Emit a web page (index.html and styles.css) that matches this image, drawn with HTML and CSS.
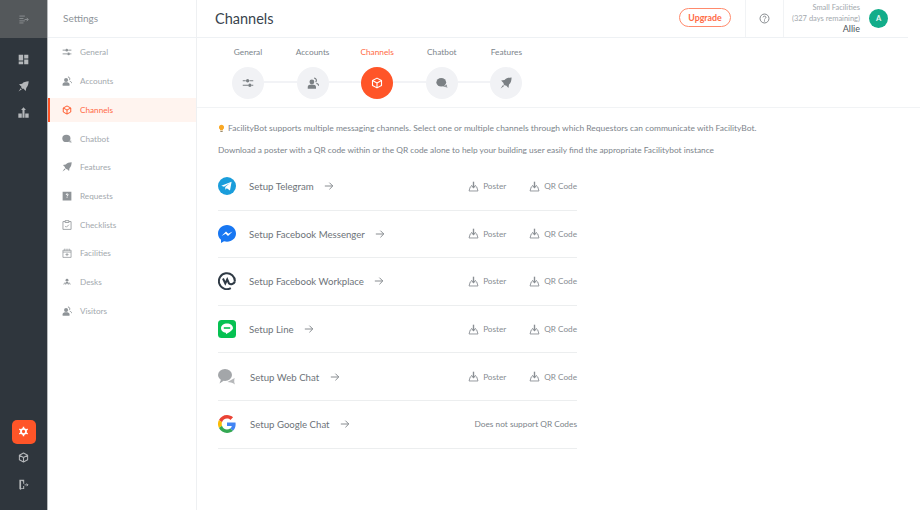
FILE: index.html
```html
<!DOCTYPE html>
<html lang="en">
<head>
<meta charset="utf-8">
<title>Channels</title>
<link rel="stylesheet" href="styles.css">
</head>
<body>
<svg class="defs" width="0" height="0" aria-hidden="true">
  <defs>
    <symbol id="i-sliders" viewBox="0 0 16 16"><path d="M1 5h4M10 5h5M1 11h7M13 11h2" fill="none" stroke="currentColor" stroke-width="1.5"/><circle cx="7.5" cy="5" r="2.2" fill="currentColor"/><circle cx="10.5" cy="11" r="2.2" fill="currentColor"/></symbol>
    <symbol id="i-users" viewBox="0 0 16 16"><circle cx="6.5" cy="6.500" r="3.200" fill="currentColor"/><path d="M1 15.500v-2.500c0-2 2.300-3 5.500-3s5.500 1 5.500 3v2.500z" fill="currentColor"/><path d="M9.500 1.500a3 3 0 0 1 2 5.200M12.500 8.500c2 .4 3 1.400 3 3" fill="none" stroke="currentColor" stroke-width="1.500"/></symbol>
    <symbol id="i-box" viewBox="0 0 16 16"><path d="M8 1.500 14 4.800v6.400L8 14.500 2 11.200V4.800zM2 4.800l6 3.200 6-3.200M8 8v6.500" fill="none" stroke="currentColor" stroke-width="1.500" stroke-linejoin="round"/></symbol>
    <symbol id="i-chat" viewBox="0 0 16 16"><ellipse cx="7" cy="7" rx="6.500" ry="5.800" fill="currentColor"/><path d="M9 12.800c2 .3 4 .5 6.500 1.700-.7-1-1-2.500-.8-4.500z" fill="currentColor" opacity=".75"/></symbol>
    <symbol id="i-rocket" viewBox="0 0 16 16"><path d="M15.500.5c-4 .3-7.500 1-9.500 3.500L1.500 4.800 5 8.200l-.5 1 2.300 2.300 1-.5 3.500 3.500.7-4.500C14.500 8 15.200 4.500 15.500.5z" fill="currentColor"/><path d="M4 10.500.8 15.200 5.500 12z" fill="currentColor"/></symbol>
    <symbol id="i-download" viewBox="0 0 16 16"><path d="M8 1v8.500" fill="none" stroke="currentColor" stroke-width="2"/><path d="M4.800 6.200 8 9.800l3.200-3.600" fill="none" stroke="currentColor" stroke-width="1.500"/><path d="M4.800 8.500H3.300L1.500 14.500h13l-1.800-6h-1.500" fill="none" stroke="currentColor" stroke-width="1.300"/></symbol>
    <symbol id="i-arrow" viewBox="0 0 12 12"><path d="M1 6h9.500M6.500 2l4 4-4 4" fill="none" stroke="currentColor" stroke-width="1.100"/></symbol>
  </defs>
</svg>

<div class="app">
  <aside class="rail">
    <div class="rail-top">
      <svg class="rail-icon-sm" viewBox="0 0 16 16"><path d="M2 3h8M2 6.500h6M2 10h8M2 13h6M9.500 8h5M12.500 5.500 15 8l-2.500 2.500" fill="none" stroke="currentColor" stroke-width="1.300"/></svg>
    </div>
    <div class="rail-main">
      <svg class="rail-icon" viewBox="0 0 16 16"><path d="M1 1h6.500v8.500H1zM9 1h6v5.500H9zM1 11h6.500v4H1zM9 8h6v7H9z" fill="currentColor"/></svg>
      <svg class="rail-icon"><use href="#i-rocket"/></svg>
      <svg class="rail-icon" viewBox="0 0 16 16"><path d="M8 .5 4.500 4.500h2V15.500h3V4.500h2zM.5 9.500h5v6h-5zM10.500 9.500h5v6h-5z" fill="currentColor"/></svg>
    </div>
    <div class="rail-bottom">
      <div class="rail-active">
        <svg class="gear" viewBox="0 0 16 16"><circle cx="8" cy="8" r="3.700" fill="none" stroke="currentColor" stroke-width="2.600"/><path d="M8 1v3M8 12v3M1.900 4.500l2.600 1.500M11.500 10l2.600 1.500M1.900 11.500 4.500 10M11.500 6l2.600-1.500" stroke="currentColor" stroke-width="2.200"/></svg>
      </div>
      <svg class="rail-icon"><use href="#i-box"/></svg>
      <svg class="rail-icon" viewBox="0 0 16 16"><path d="M2 1h7v6H7.500V3.500L4.500 2.500v11h3V10H9v4.500H4.500V16L2 14.500z" fill="currentColor"/><path d="M9.500 8.500h5M12.500 6.500l2 2-2 2" fill="none" stroke="currentColor" stroke-width="1.300"/></svg>
    </div>
  </aside>

  <nav class="side">
    <div class="side-title">Settings</div>
    <ul class="side-list">
      <li class="side-item"><svg class="side-icon"><use href="#i-sliders"/></svg>General</li>
      <li class="side-item"><svg class="side-icon"><use href="#i-users"/></svg>Accounts</li>
      <li class="side-item is-active"><svg class="side-icon"><use href="#i-box"/></svg>Channels</li>
      <li class="side-item"><svg class="side-icon"><use href="#i-chat"/></svg>Chatbot</li>
      <li class="side-item"><svg class="side-icon"><use href="#i-rocket"/></svg>Features</li>
      <li class="side-item"><svg class="side-icon" viewBox="0 0 16 16"><path fill-rule="evenodd" d="M1 1h14v14H1zM6 6.200h1.400c0-1 1.200-1.300 1.600-.6.400.8-1.600 1.500-1.600 3.200h1.400c0-1.200 2-1.800 1.500-3.600C9.700 3.400 6.300 3.600 6 6.200zM7.400 9.800v1.500h1.400V9.800z" fill="currentColor"/></svg>Requests</li>
      <li class="side-item"><svg class="side-icon" viewBox="0 0 16 16"><path d="M5 2.500H1.500v12.500h13V2.500H11M5 1h6v3H5zM5 9.500l2 2 4-4" fill="none" stroke="currentColor" stroke-width="1.300"/></svg>Checklists</li>
      <li class="side-item"><svg class="side-icon" viewBox="0 0 16 16"><path d="M1.500 3.500h13V15h-13zM1.500 6.500h13M4.500 1v3.500M8 1v3.500M11.500 1v3.500M8 8v5M5.500 10.500h5" fill="none" stroke="currentColor" stroke-width="1.200"/></svg>Facilities</li>
      <li class="side-item"><svg class="side-icon" viewBox="0 0 16 16"><circle cx="8" cy="5" r="2.300" fill="currentColor"/><path d="M5 12c0-3 1-4.500 3-4.500s3 1.500 3 4.500H9.500L8 9.500 6.500 12zM2 12l2-3.500.6 1L3.500 12zM14 12l-2-3.500-.6 1 1.100 2.500z" fill="currentColor"/></svg>Desks</li>
      <li class="side-item"><svg class="side-icon"><use href="#i-users"/></svg>Visitors</li>
    </ul>
  </nav>

  <div class="main">
    <header class="topbar">
      <h1 class="page-title">Channels</h1>
      <button class="upgrade" type="button">Upgrade</button>
      <div class="help">
        <svg class="help-icon" viewBox="0 0 16 16"><circle cx="8" cy="8" r="6.500" fill="none" stroke="currentColor" stroke-width="1.300"/><path d="M5.800 6.300C6 4 10.200 4 10.200 6.300c0 1.500-2.200 1.500-2.200 3.200" fill="none" stroke="currentColor" stroke-width="1.200"/><circle cx="8" cy="11.500" r=".8" fill="currentColor"/></svg>
      </div>
      <div class="account">
        <div class="plan">
          <div>Small Facilities</div>
          <div>(327 days remaining)</div>
          <div class="user">Allie</div>
        </div>
        <div class="avatar">A</div>
      </div>
    </header>

    <div class="stepper">
      <div class="step"><span class="step-label">General</span><span class="step-dot"><svg class="step-icon"><use href="#i-sliders"/></svg></span></div>
      <div class="step"><span class="step-label">Accounts</span><span class="step-dot"><svg class="step-icon"><use href="#i-users"/></svg></span></div>
      <div class="step is-current"><span class="step-label">Channels</span><span class="step-dot"><svg class="step-icon"><use href="#i-box"/></svg></span></div>
      <div class="step"><span class="step-label">Chatbot</span><span class="step-dot"><svg class="step-icon"><use href="#i-chat"/></svg></span></div>
      <div class="step"><span class="step-label">Features</span><span class="step-dot"><svg class="step-icon"><use href="#i-rocket"/></svg></span></div>
    </div>

    <section class="content">
      <p class="intro"><svg class="bulb" viewBox="0 0 12 14"><path d="M6 .5a4.500 4.500 0 0 0-2.500 8.200V10h5V8.700A4.500 4.500 0 0 0 6 .5z" fill="#f9a825"/><path d="M4 11h4v2H4z" fill="#9a8c70"/></svg>FacilityBot supports multiple messaging channels. Select one or multiple channels through which Requestors can communicate with FacilityBot.</p>
      <p class="intro intro-2">Download a poster with a QR code within or the QR code alone to help your building user easily find the appropriate Facilitybot instance</p>

      <ul class="channels">
        <li class="channel">
          <svg class="logo" viewBox="0 0 18 18"><circle cx="9" cy="9" r="9" fill="#1a9ddb"/><path d="M3.300 8.800 13.600 4.700 12 13.500 8.800 11.200 7.400 12.700 7.200 10 12 5.900 6 9.700z" fill="#fff"/></svg>
          <a class="setup">Setup Telegram<svg class="arrow"><use href="#i-arrow"/></svg></a>
          <a class="dl"><svg class="dl-icon"><use href="#i-download"/></svg>Poster</a>
          <a class="dl dl-qr"><svg class="dl-icon"><use href="#i-download"/></svg>QR Code</a>
        </li>
        <li class="channel">
          <svg class="logo" viewBox="0 0 18 18"><path d="M9 0C4 0 0 3.700 0 8.500c0 2.500 1.100 4.700 3 6.200V18l3-1.700c1 .3 2 .4 3 .4 5 0 9-3.500 9-8.200S14 0 9 0z" fill="#1877f2"/><path d="M3.500 11 8 6.500l2.300 2.200L14.500 6.500 10 11 7.700 8.800z" fill="#fff"/></svg>
          <a class="setup">Setup Facebook Messenger<svg class="arrow"><use href="#i-arrow"/></svg></a>
          <a class="dl"><svg class="dl-icon"><use href="#i-download"/></svg>Poster</a>
          <a class="dl dl-qr"><svg class="dl-icon"><use href="#i-download"/></svg>QR Code</a>
        </li>
        <li class="channel">
          <svg class="logo" viewBox="0 0 18 18"><path d="M12.800 16.200A8 8 0 1 1 16.900 9.500" fill="none" stroke="#2f3a45" stroke-width="2"/><path d="M5 6.500 7.300 11.500 9.200 7.500 11 11.500c1.800 1.300 4.800.6 5.900-2" fill="none" stroke="#2f3a45" stroke-width="2"/></svg>
          <a class="setup">Setup Facebook Workplace<svg class="arrow"><use href="#i-arrow"/></svg></a>
          <a class="dl"><svg class="dl-icon"><use href="#i-download"/></svg>Poster</a>
          <a class="dl dl-qr"><svg class="dl-icon"><use href="#i-download"/></svg>QR Code</a>
        </li>
        <li class="channel">
          <svg class="logo" viewBox="0 0 18 18"><rect width="18" height="18" rx="3.500" fill="#06c152"/><path d="M9 3.500c-3.300 0-6 2-6 4.700 0 2.300 2 4.200 4.700 4.600.5.100.3.800.2 1.400 2-1 5-3 6.300-4.500.5-.6.800-1 .8-1.500 0-2.700-2.700-4.700-6-4.700z" fill="#fff"/><path d="M5.800 8h6.400" stroke="#06c152" stroke-width="1.600"/></svg>
          <a class="setup">Setup Line<svg class="arrow"><use href="#i-arrow"/></svg></a>
          <a class="dl"><svg class="dl-icon"><use href="#i-download"/></svg>Poster</a>
          <a class="dl dl-qr"><svg class="dl-icon"><use href="#i-download"/></svg>QR Code</a>
        </li>
        <li class="channel">
          <svg class="logo" viewBox="0 0 18 18"><ellipse cx="7" cy="7" rx="7" ry="6" fill="#a3a6a9"/><path d="M3 11.500 1.500 15.500 6 12.500z" fill="#a3a6a9"/><path d="M9.500 14c2 .2 5 .3 7.500 2.500-1-2-1-4-.3-6.500z" fill="#b6b8ba"/></svg>
          <a class="setup setup-shift">Setup Web Chat<svg class="arrow"><use href="#i-arrow"/></svg></a>
          <a class="dl"><svg class="dl-icon"><use href="#i-download"/></svg>Poster</a>
          <a class="dl dl-qr"><svg class="dl-icon"><use href="#i-download"/></svg>QR Code</a>
        </li>
        <li class="channel">
          <svg class="logo" viewBox="0 0 48 48"><path fill="#ea4335" d="M24 9.500c3.500 0 6.700 1.200 9.200 3.600l6.900-6.900C35.900 2.400 30.500 0 24 0 14.600 0 6.500 5.400 2.600 13.200l8 6.200C12.400 13.700 17.700 9.500 24 9.500z"/><path fill="#4285f4" d="M47 24.500c0-1.600-.1-3.100-.4-4.500H24v9h12.900c-.6 3-2.200 5.500-4.700 7.200l7.700 6C44.400 38.100 47 31.900 47 24.500z"/><path fill="#fbbc05" d="M10.600 28.600a14.500 14.500 0 0 1 0-9.200l-8-6.200a24 24 0 0 0 0 21.600z"/><path fill="#34a853" d="M24 48c6.500 0 11.900-2.100 15.900-5.800l-7.700-6c-2.200 1.400-4.900 2.300-8.200 2.300-6.300 0-11.600-4.200-13.400-9.900l-8 6.200C6.500 42.600 14.600 48 24 48z"/></svg>
          <a class="setup setup-shift">Setup Google Chat<svg class="arrow"><use href="#i-arrow"/></svg></a>
          <span class="no-qr">Does not support QR Codes</span>
        </li>
      </ul>
    </section>
  </div>
</div>
</body>
</html>
```
FILE: styles.css
```css
* { box-sizing: border-box; }
html, body { margin: 0; height: 100%; }
body {
  background: #fff;
  font-family: "Lato", "Noto Sans", sans-serif;
  font-size: 9px;
  color: #6c757d;
  overflow: hidden;
}
.defs { display: block; height: 0; }
.app { display: flex; width: 920px; height: 510px; }

.rail {
  width: 48px;
  flex: none;
  display: flex;
  flex-direction: column;
  background: #2f363d;
  border-right: 1px solid #b9bbbd;
  color: #b4b7ba;
}
.rail-top {
  height: 38px;
  flex: none;
  display: flex;
  align-items: center;
  justify-content: center;
  background: #54585b;
  color: #8f9295;
}
.rail-icon-sm { width: 11px; height: 11px; }
.rail-main {
  flex: 1;
  display: flex;
  flex-direction: column;
  align-items: center;
  gap: 15.500px;
  padding-top: 16px;
}
.rail-icon { width: 11px; height: 11px; flex: none; }
.rail-bottom {
  display: flex;
  flex-direction: column;
  align-items: center;
  gap: 16px;
  padding-bottom: 20px;
}
.rail-active {
  width: 24px;
  height: 24px;
  margin-bottom: -7.500px;
  border-radius: 5px;
  background: #ff5528;
  color: #fff;
  display: flex;
  align-items: center;
  justify-content: center;
}
.gear { width: 11px; height: 11px; }

.side {
  width: 149px;
  flex: none;
  border-right: 1px solid #eef0f2;
}
.side-title {
  height: 38px;
  padding: 0 0 2px 15px;
  display: flex;
  align-items: center;
  font-size: 10px;
  color: #8e9499;
  border-bottom: 1px solid #eef1f4;
}
.side-list { list-style: none; margin: 0; padding: 0; }
.side-item {
  height: 28.700px;
  padding-left: 13px;
  display: flex;
  align-items: center;
  gap: 8px;
  font-size: 8.200px;
  color: #a3a9ae;
  border-left: 1px solid transparent;
}
.side-item.is-active {
  height: 24px;
  margin: 2.400px 0;
  padding-left: 12px;
  background: #fff4ef;
  color: #ff6a45;
  border-left: 2px solid #ff5528;
}
.side-icon { width: 10px; height: 10px; color: #8f9498; flex: none; }
.is-active .side-icon { color: #ff5528; }

.main { flex: 1; min-width: 0; display: flex; flex-direction: column; }
.topbar {
  width: 711px;
  height: 38px;
  flex: none;
  display: flex;
  align-items: stretch;
  border-bottom: 1px solid #eef1f4;
  padding-left: 18px;
}
.page-title {
  flex: 1;
  margin: 0;
  align-self: center;
  font-size: 14.500px;
  font-weight: 400;
  color: #38434d;
}
.upgrade {
  width: 52px;
  height: 19px;
  margin: 8px 14px 0 0;
  padding: 0;
  border: 1px solid #ff8a6c;
  border-radius: 10px;
  background: #fff;
  color: #ff6a45;
  font: 700 8.800px "Lato", sans-serif;
}
.help {
  width: 39px;
  display: flex;
  align-items: center;
  justify-content: center;
  border-left: 1px solid #f1f3f5;
  border-right: 1px solid #f1f3f5;
  color: #777c80;
}
.help-icon { width: 11px; height: 11px; }
.account { display: flex; align-items: center; flex: 1; max-width: 124px; justify-content: flex-end; padding-right: 20px; gap: 9px; }
.plan { text-align: right; font-size: 7.500px; line-height: 10.500px; color: #a3a9ae; padding-top: 1px; }
.user { font-size: 9px; color: #4b545c; }
.avatar {
  width: 19px;
  height: 19px;
  flex: none;
  border-radius: 50%;
  background: #12ad8a;
  color: #e8f8f4;
  font-size: 7.500px;
  font-weight: 700;
  display: flex;
  align-items: center;
  justify-content: center;
}

.stepper {
  height: 70px;
  flex: none;
  padding-left: 35px;
  display: flex;
  gap: 32.600px;
  border-bottom: 1px solid #f1f3f5;
}
.step {
  width: 32px;
  position: relative;
  display: flex;
  flex-direction: column;
  align-items: center;
  padding-top: 8px;
  gap: 8px;
}
.step:not(:last-child)::after {
  content: "";
  position: absolute;
  left: 32px;
  top: 43px;
  width: 33px;
  height: 2px;
  background: #f2f3f6;
}
.step-label { font-size: 8.300px; line-height: 13px; color: #7d858c; white-space: nowrap; }
.step-dot {
  width: 32px;
  height: 32px;
  border-radius: 50%;
  background: #f1f2f5;
  color: #7b8084;
  display: flex;
  align-items: center;
  justify-content: center;
}
.step-icon { width: 12px; height: 12px; }
.is-current .step-label { color: #ff6a45; }
.is-current .step-dot { background: #ff5528; color: #fff; }

.content { padding: 14px 0 0 21px; }
.intro { margin: 0; font-size: 8.460px; line-height: 13px; color: #7c848b; display: flex; align-items: center; white-space: nowrap; }
.intro-2 { margin-top: 8.500px; font-size: 8.330px; }
.bulb { width: 7px; height: 9px; margin-right: 3px; }
.channels { list-style: none; margin: 6.500px 0 0; padding: 0; width: 359px; }
.channel {
  height: 47.600px;
  display: flex;
  align-items: center;
  border-bottom: 1px solid #eceeef;
}
.logo { width: 18px; height: 18px; flex: none; margin-right: 13px; }
.setup {
  flex: 1;
  display: flex;
  align-items: center;
  gap: 10.500px;
  font-size: 9.650px;
  color: #6d7379;
}
.setup-shift { margin-left: 1px; }
.arrow { width: 10px; height: 10px; color: #7d8287; }
.dl { display: flex; align-items: center; gap: 4px; font-size: 8.200px; color: #878d92; }
.dl-qr { margin-left: 23px; }
.dl-icon { width: 11px; height: 11px; color: #8a8f94; }
.no-qr { font-size: 8.300px; color: #7d848a; }
```
